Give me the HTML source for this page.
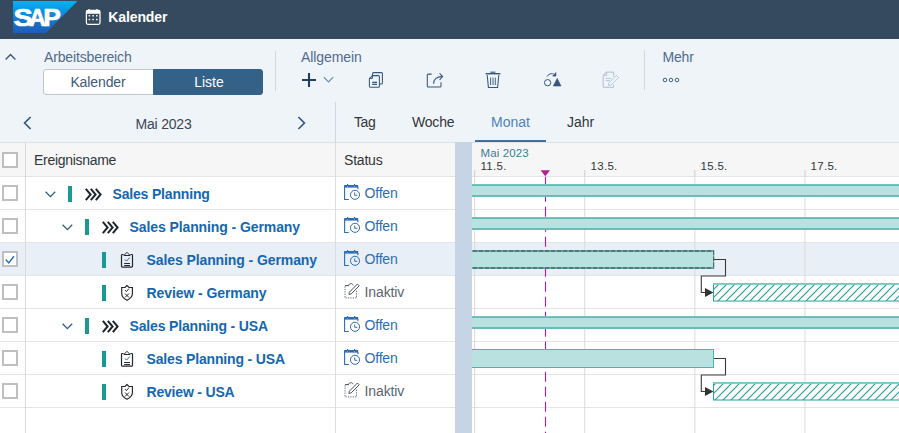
<!DOCTYPE html><html lang="de"><head><meta charset="utf-8"><title>Kalender</title><style>
*{box-sizing:border-box;margin:0;padding:0}
html,body{width:899px;height:433px;overflow:hidden;background:#fff}
body{font-family:"Liberation Sans",sans-serif;font-size:14px;line-height:16px;color:#32363a;position:relative}
.a{position:absolute;white-space:nowrap}
.hdr{left:0;top:0;width:899px;height:39px;background:#354a5f}
.tb{left:0;top:39px;width:899px;height:103px;background:#eff4f9}
.lbl{color:#516b8c}
.seg{top:69px;height:26px;text-align:center;line-height:24px}
.vl{width:1px;background:#d3d7db}
.hl{height:1px;background:#e4e4e4}
.cb{left:2px;width:16px;height:16px;border:2px solid #bfbfbf;background:#fff}
.ttl{font-weight:700;color:#1467b0}
.bar{background:#b9e1df;border-top:2px solid #62b9b5;border-bottom:2px solid #62b9b5}
svg{position:absolute;overflow:visible}
</style></head><body>
<div class="a hdr"></div>
<svg style="left:13px;top:1px" width="65" height="32" viewBox="0 0 65 32"><defs><linearGradient id="sg" x1="0" y1="0" x2="0" y2="1"><stop offset="0" stop-color="#00b5f0"/><stop offset="0.25" stop-color="#0a9be3"/><stop offset="0.7" stop-color="#1670c8"/><stop offset="1" stop-color="#1e5cba"/></linearGradient></defs><polygon points="0,0 64.5,0 33,32 0,32" fill="url(#sg)"/><g font-family="Liberation Sans,sans-serif" font-weight="700" font-size="24" fill="#fff" stroke="#fff" stroke-width="0.7"><text transform="translate(0.5 25) scale(1.2 1)">S</text><text transform="translate(16 25) scale(0.97 1)">A</text><text transform="translate(30.3 25) scale(1.1 1)">P</text></g></svg>
<svg style="left:85px;top:9px" width="16" height="16" viewBox="0 0 16 16" fill="none" stroke="#fff"><rect x="1.4" y="1.45" width="13.6" height="13.8" rx="1.5" stroke-width="1.25"/><rect x="1.4" y="1.2" width="13.6" height="3.6" fill="#fff" stroke="none"/><path d="M4 0v1.6M12 0v1.6" stroke-width="1.3"/><g fill="#fff" stroke="none"><rect x="3.6" y="6" width="1.6" height="1.5" opacity="0.92"/><rect x="7.3" y="6" width="1.6" height="1.5" opacity="0.92"/><rect x="11" y="6" width="1.6" height="1.5" opacity="0.92"/><rect x="3.6" y="9.8" width="1.6" height="1.5" opacity="0.92"/><rect x="7.3" y="9.8" width="1.6" height="1.5" opacity="0.92"/><rect x="11" y="9.8" width="1.6" height="1.5" opacity="0.92"/></g></svg>
<div class="a" style="left:108.2px;top:9px;color:#fff;font-weight:700;letter-spacing:-0.09px">Kalender</div>
<div class="a tb"></div>
<svg style="left:5px;top:52.5px" width="11" height="8" viewBox="0 0 11 8" fill="none" stroke="#3f5878" stroke-width="1.4"><path d="M0.6 6.6L5.5 1.4L10.4 6.6"/></svg>
<div class="a lbl" style="left:44px;top:49px;letter-spacing:-0.14px">Arbeitsbereich</div>
<div class="a seg" style="left:43px;width:111px;background:#fff;border:1px solid #c2c6cb;border-radius:3px 0 0 3px;color:#3f5878;letter-spacing:-0.1px;padding-right:1px">Kalender</div>
<div class="a seg" style="left:153px;width:110px;background:#346187;border:1px solid #346187;border-radius:0 3px 3px 0;color:#fff;padding-left:2px">Liste</div>
<div class="a vl" style="left:275px;top:51px;height:40px"></div>
<div class="a lbl" style="left:301px;top:49px;letter-spacing:-0.1px">Allgemein</div>
<svg style="left:301px;top:72px" width="16" height="16" viewBox="0 0 16 16" fill="none" stroke="#223e5f" stroke-width="2.1"><path d="M8 1v14M1 8h14"/></svg>
<svg style="left:323px;top:76px" width="11" height="8" viewBox="0 0 11 8" fill="none" stroke="#6a87ab" stroke-width="1.1"><path d="M0.8 1.2L5.5 6L10.2 1.2"/></svg>
<svg style="left:368px;top:71px" width="16" height="18" viewBox="0 0 16 18" fill="none" stroke="#36557d" stroke-width="1.05"><path d="M4.6 4.4V2.6q0-1 1-1H13.4q1 0 1 1V12q0 1-1 1H11.4"/><path d="M4.4 4.6H10.4q1 0 1 1V15.2q0 1-1 1H2.4q-1 0-1-1V7.6z"/><path d="M1.6 7.4H4.4V4.8" stroke-width="1"/><path d="M4.2 11.4H9M4.2 13.4H9" stroke-width="1.1"/></svg>
<svg style="left:426px;top:71px" width="18" height="18" viewBox="0 0 18 18" fill="none" stroke="#36557d" stroke-width="1.05"><path d="M5.6 3.1H2.3q-1 0-1 1V15q0 1 1 1H14q1 0 1-1V11.2"/><path d="M7.6 12.8C7.6 8.6 10.2 5.6 16.2 5.6"/><path d="M13.6 2.4L16.6 5.6L13.6 9"/></svg>
<svg style="left:485px;top:71px" width="16" height="18" viewBox="0 0 16 18" fill="none" stroke="#36557d" stroke-width="1.05"><path d="M0.6 2.7H15.4" stroke-width="1.4"/><path d="M5.4 1.2H10.4" stroke-width="1.1"/><path d="M2.2 4L3.4 16.4H12.6L13.8 4"/><path d="M5.6 6.6V14M8 6.6V14M10.3 6.6V14" stroke-width="0.9"/></svg>
<svg style="left:543px;top:72px" width="19" height="16" viewBox="0 0 19 16" fill="none" stroke="#36557d" stroke-width="1"><circle cx="4.6" cy="10.7" r="3.15"/><path d="M14.2 6.4L18 14H10.3z" fill="#36557d" stroke-width="0.6"/><path d="M4 4.6C6 1 10.4 0.8 12.6 3.4"/><path d="M12.8 0.4V4H9.6" fill="#36557d" stroke-width="0.9"/></svg>
<svg style="left:602px;top:71px" width="18" height="18" viewBox="0 0 18 18" fill="none" stroke="#b9c9da" stroke-width="1.2"><path d="M11.6 5.4V2.2q0-1-1-1H4.6L1.2 4.6V15.4q0 1 1 1H10.6q1 0 1-1V13.6"/><path d="M1.4 4.6H4.6V1.4" stroke-width="1"/><path d="M3.6 7.4H9.4M3.6 9.6H8" stroke-width="1"/><path d="M6.4 14.6L7 11.8L14.4 4.4L16.6 6.6L9.2 14z" stroke-width="1"/></svg>
<div class="a vl" style="left:644px;top:50px;height:40px"></div>
<div class="a lbl" style="left:662.5px;top:49px;letter-spacing:-0.2px">Mehr</div>
<svg style="left:662px;top:77px" width="19" height="6" viewBox="0 0 19 6" fill="none" stroke="#46617f" stroke-width="1"><circle cx="3" cy="3" r="1.8"/><circle cx="9" cy="3" r="1.8"/><circle cx="15" cy="3" r="1.8"/></svg>
<svg style="left:23px;top:116px" width="9" height="14" viewBox="0 0 9 14" fill="none" stroke="#2f5a8c" stroke-width="1.7"><path d="M7.6 1L1.6 7L7.6 13"/></svg>
<div class="a" style="left:135.5px;top:116px;color:#3a4654;letter-spacing:-0.2px">Mai 2023</div>
<svg style="left:297px;top:116px" width="9" height="14" viewBox="0 0 9 14" fill="none" stroke="#2f5a8c" stroke-width="1.7"><path d="M1.4 1L7.4 7L1.4 13"/></svg>
<div class="a" style="left:354px;top:114.3px;letter-spacing:-0.4px">Tag</div>
<div class="a" style="left:412px;top:114.3px;letter-spacing:-0.2px">Woche</div>
<div class="a" style="left:491px;top:114.3px;color:#4f82b8">Monat</div>
<div class="a" style="left:567px;top:114.3px;letter-spacing:-0.05px">Jahr</div>
<div class="a" style="left:475px;top:139.5px;width:71px;height:2.5px;background:#3b72a8"></div>
<div class="a" style="left:0;top:142px;width:899px;height:35px;background:#f6f6f6;border-top:1px solid #e0e0e0"></div>
<div class="a" style="left:0;top:242px;width:899px;height:33px;background:#e8eff7"></div>
<div class="a hl" style="left:0;top:176px;width:899px"></div>
<div class="a hl" style="left:0;top:209px;width:899px"></div>
<div class="a hl" style="left:0;top:242px;width:899px"></div>
<div class="a hl" style="left:0;top:275px;width:899px"></div>
<div class="a hl" style="left:0;top:308px;width:899px"></div>
<div class="a hl" style="left:0;top:341px;width:899px"></div>
<div class="a hl" style="left:0;top:374px;width:899px"></div>
<div class="a hl" style="left:0;top:407px;width:899px"></div>
<div class="a vl" style="left:25px;top:142px;height:291px;background:#dadada"></div>
<div class="a vl" style="left:335px;top:102px;height:40px;background:#cdd6e2"></div>
<div class="a vl" style="left:335px;top:142px;height:291px;background:#dddddd"></div>
<div class="a cb" style="top:152px"></div>
<div class="a" style="left:34px;top:152px;letter-spacing:-0.3px">Ereignisname</div>
<div class="a" style="left:344px;top:152px;letter-spacing:-0.2px">Status</div>
<div class="a" style="left:480.5px;top:147px;font-size:11.5px;line-height:13px;color:#3d7d92;letter-spacing:0.12px">Mai 2023</div>
<div class="a" style="left:480.5px;top:160px;font-size:11.5px;line-height:13px;color:#32363a;letter-spacing:0.3px">11.5.</div>
<div class="a" style="left:590.5px;top:160px;font-size:11.5px;line-height:13px;color:#32363a;letter-spacing:0.3px">13.5.</div>
<div class="a" style="left:700.5px;top:160px;font-size:11.5px;line-height:13px;color:#32363a;letter-spacing:0.3px">15.5.</div>
<div class="a" style="left:810.5px;top:160px;font-size:11.5px;line-height:13px;color:#32363a;letter-spacing:0.3px">17.5.</div>
<div class="a cb" style="top:185px"></div>
<svg style="left:45px;top:191px" width="11" height="7" viewBox="0 0 11 7" fill="none" stroke="#2f5a8c" stroke-width="1.3"><path d="M0.6 0.7L5.4 5.6L10.2 0.7"/></svg>
<div class="a" style="left:68px;top:186px;width:4px;height:15.6px;background:#179a94"></div>
<svg style="left:84.7px;top:188.3px" width="17" height="13" viewBox="0 0 17 13" fill="none" stroke="#1f242a" stroke-width="2"><path d="M0.8 0.9L5.6 6.5L0.8 12.1M5.8 0.9L10.6 6.5L5.8 12.1M10.8 0.9L15.6 6.5L10.8 12.1"/></svg>
<div class="a ttl" style="left:112.5px;top:185.7px;letter-spacing:-0.171px">Sales Planning</div>
<svg style="left:344px;top:184px" width="17" height="17" viewBox="0 0 17 17" fill="none" stroke="#2d6cb3" stroke-width="1.1"><path d="M4.8 15.5H0.6V1.6"/><path d="M0.4 1H14.2V3.6H0.4z" fill="#2d6cb3" stroke="none"/><path d="M13.9 3V5.2"/><path d="M3.6 0V1.4M10.6 0V1.4" stroke-width="1.2"/><circle cx="3.6" cy="2.3" r="0.42" fill="#fff" stroke="none"/><circle cx="10.6" cy="2.3" r="0.42" fill="#fff" stroke="none"/><circle cx="11" cy="10.8" r="4.55" stroke-width="1"/><path d="M10.7 8.5V11.3H13.3" stroke-width="0.95"/></svg>
<div class="a" style="left:364.5px;top:185.4px;color:#2d6cb3;letter-spacing:-0.2px">Offen</div>
<div class="a cb" style="top:218px"></div>
<svg style="left:62px;top:224px" width="11" height="7" viewBox="0 0 11 7" fill="none" stroke="#2f5a8c" stroke-width="1.3"><path d="M0.6 0.7L5.4 5.6L10.2 0.7"/></svg>
<div class="a" style="left:85px;top:219px;width:4px;height:15.6px;background:#179a94"></div>
<svg style="left:101.7px;top:221.3px" width="17" height="13" viewBox="0 0 17 13" fill="none" stroke="#1f242a" stroke-width="2"><path d="M0.8 0.9L5.6 6.5L0.8 12.1M5.8 0.9L10.6 6.5L5.8 12.1M10.8 0.9L15.6 6.5L10.8 12.1"/></svg>
<div class="a ttl" style="left:129.5px;top:218.7px;letter-spacing:-0.093px">Sales Planning - Germany</div>
<svg style="left:344px;top:217px" width="17" height="17" viewBox="0 0 17 17" fill="none" stroke="#2d6cb3" stroke-width="1.1"><path d="M4.8 15.5H0.6V1.6"/><path d="M0.4 1H14.2V3.6H0.4z" fill="#2d6cb3" stroke="none"/><path d="M13.9 3V5.2"/><path d="M3.6 0V1.4M10.6 0V1.4" stroke-width="1.2"/><circle cx="3.6" cy="2.3" r="0.42" fill="#fff" stroke="none"/><circle cx="10.6" cy="2.3" r="0.42" fill="#fff" stroke="none"/><circle cx="11" cy="10.8" r="4.55" stroke-width="1"/><path d="M10.7 8.5V11.3H13.3" stroke-width="0.95"/></svg>
<div class="a" style="left:364.5px;top:218.4px;color:#2d6cb3;letter-spacing:-0.2px">Offen</div>
<div class="a cb" style="top:251px"></div>
<svg style="left:4px;top:253px" width="12" height="12" viewBox="0 0 12 12" fill="none" stroke="#2f6db1" stroke-width="1.5"><path d="M1.7 6.6L4.8 9.9L9.9 3.2"/></svg>
<div class="a" style="left:102px;top:252px;width:4px;height:15.6px;background:#179a94"></div>
<svg style="left:120px;top:251px" width="14" height="17" viewBox="0 0 14 17" fill="none" stroke="#23262d" stroke-width="1.2"><path d="M3.6 3.5H2.3q-0.8 0-0.8 0.8V15.3q0 0.8 0.8 0.8H11.7q0.8 0 0.8-0.8V4.3q0-0.8-0.8-0.8H10.4"/><path d="M3.9 4.5L7 1.3L10.1 4.5z" stroke-width="1"/><path d="M4.9 8.4L6.5 10.1L9.8 6.5" stroke="#3b5d90" stroke-width="1"/><path d="M4.2 12.5H10M4.2 14.5H10" stroke-width="1"/></svg>
<div class="a ttl" style="left:146.5px;top:251.7px;letter-spacing:-0.093px">Sales Planning - Germany</div>
<svg style="left:344px;top:250px" width="17" height="17" viewBox="0 0 17 17" fill="none" stroke="#2d6cb3" stroke-width="1.1"><path d="M4.8 15.5H0.6V1.6"/><path d="M0.4 1H14.2V3.6H0.4z" fill="#2d6cb3" stroke="none"/><path d="M13.9 3V5.2"/><path d="M3.6 0V1.4M10.6 0V1.4" stroke-width="1.2"/><circle cx="3.6" cy="2.3" r="0.42" fill="#fff" stroke="none"/><circle cx="10.6" cy="2.3" r="0.42" fill="#fff" stroke="none"/><circle cx="11" cy="10.8" r="4.55" stroke-width="1"/><path d="M10.7 8.5V11.3H13.3" stroke-width="0.95"/></svg>
<div class="a" style="left:364.5px;top:251.4px;color:#2d6cb3;letter-spacing:-0.2px">Offen</div>
<div class="a cb" style="top:284px"></div>
<div class="a" style="left:102px;top:285px;width:4px;height:15.6px;background:#179a94"></div>
<svg style="left:120px;top:284px" width="14" height="17" viewBox="0 0 14 17" fill="none" stroke="#23262d" stroke-width="1.15"><path d="M7 1.5L5 3.5H1.7V9.6C1.7 12.8 4.2 15 7 16.3C9.8 15 12.4 12.8 12.4 9.6V3.5H9z"/><path d="M5 6.1L6.4 7.6L9 4.6" stroke-width="1"/><path d="M5 9.5L9 13.5M9 9.5L5 13.5" stroke-width="1"/></svg>
<div class="a ttl" style="left:146.5px;top:284.7px;letter-spacing:-0.087px">Review - Germany</div>
<svg style="left:344px;top:282px" width="17" height="17" viewBox="0 0 17 17" fill="none" stroke="#4d5560" stroke-width="1"><path d="M5 3.6H1V15.9H12.5V8.6" stroke-dasharray="1.3 1.1" stroke="#6a727c"/><path d="M1 3.6H4.6C5 1.2 8.4 1 9 3.2" stroke-width="1"/><path d="M4.9 12.4L5.4 10.2L13.4 2L15.2 3.8L7.1 12z" stroke-width="1"/></svg>
<div class="a" style="left:364.5px;top:283.6px;color:#5a6570;letter-spacing:-0.1px">Inaktiv</div>
<div class="a cb" style="top:317px"></div>
<svg style="left:62px;top:323px" width="11" height="7" viewBox="0 0 11 7" fill="none" stroke="#2f5a8c" stroke-width="1.3"><path d="M0.6 0.7L5.4 5.6L10.2 0.7"/></svg>
<div class="a" style="left:85px;top:318px;width:4px;height:15.6px;background:#179a94"></div>
<svg style="left:101.7px;top:320.3px" width="17" height="13" viewBox="0 0 17 13" fill="none" stroke="#1f242a" stroke-width="2"><path d="M0.8 0.9L5.6 6.5L0.8 12.1M5.8 0.9L10.6 6.5L5.8 12.1M10.8 0.9L15.6 6.5L10.8 12.1"/></svg>
<div class="a ttl" style="left:129.5px;top:317.7px;letter-spacing:-0.16px">Sales Planning - USA</div>
<svg style="left:344px;top:316px" width="17" height="17" viewBox="0 0 17 17" fill="none" stroke="#2d6cb3" stroke-width="1.1"><path d="M4.8 15.5H0.6V1.6"/><path d="M0.4 1H14.2V3.6H0.4z" fill="#2d6cb3" stroke="none"/><path d="M13.9 3V5.2"/><path d="M3.6 0V1.4M10.6 0V1.4" stroke-width="1.2"/><circle cx="3.6" cy="2.3" r="0.42" fill="#fff" stroke="none"/><circle cx="10.6" cy="2.3" r="0.42" fill="#fff" stroke="none"/><circle cx="11" cy="10.8" r="4.55" stroke-width="1"/><path d="M10.7 8.5V11.3H13.3" stroke-width="0.95"/></svg>
<div class="a" style="left:364.5px;top:317.4px;color:#2d6cb3;letter-spacing:-0.2px">Offen</div>
<div class="a cb" style="top:350px"></div>
<div class="a" style="left:102px;top:351px;width:4px;height:15.6px;background:#179a94"></div>
<svg style="left:120px;top:350px" width="14" height="17" viewBox="0 0 14 17" fill="none" stroke="#23262d" stroke-width="1.2"><path d="M3.6 3.5H2.3q-0.8 0-0.8 0.8V15.3q0 0.8 0.8 0.8H11.7q0.8 0 0.8-0.8V4.3q0-0.8-0.8-0.8H10.4"/><path d="M3.9 4.5L7 1.3L10.1 4.5z" stroke-width="1"/><path d="M4.9 8.4L6.5 10.1L9.8 6.5" stroke="#3b5d90" stroke-width="1"/><path d="M4.2 12.5H10M4.2 14.5H10" stroke-width="1"/></svg>
<div class="a ttl" style="left:146.5px;top:350.7px;letter-spacing:-0.16px">Sales Planning - USA</div>
<svg style="left:344px;top:349px" width="17" height="17" viewBox="0 0 17 17" fill="none" stroke="#2d6cb3" stroke-width="1.1"><path d="M4.8 15.5H0.6V1.6"/><path d="M0.4 1H14.2V3.6H0.4z" fill="#2d6cb3" stroke="none"/><path d="M13.9 3V5.2"/><path d="M3.6 0V1.4M10.6 0V1.4" stroke-width="1.2"/><circle cx="3.6" cy="2.3" r="0.42" fill="#fff" stroke="none"/><circle cx="10.6" cy="2.3" r="0.42" fill="#fff" stroke="none"/><circle cx="11" cy="10.8" r="4.55" stroke-width="1"/><path d="M10.7 8.5V11.3H13.3" stroke-width="0.95"/></svg>
<div class="a" style="left:364.5px;top:350.4px;color:#2d6cb3;letter-spacing:-0.2px">Offen</div>
<div class="a cb" style="top:383px"></div>
<div class="a" style="left:102px;top:384px;width:4px;height:15.6px;background:#179a94"></div>
<svg style="left:120px;top:383px" width="14" height="17" viewBox="0 0 14 17" fill="none" stroke="#23262d" stroke-width="1.15"><path d="M7 1.5L5 3.5H1.7V9.6C1.7 12.8 4.2 15 7 16.3C9.8 15 12.4 12.8 12.4 9.6V3.5H9z"/><path d="M5 6.1L6.4 7.6L9 4.6" stroke-width="1"/><path d="M5 9.5L9 13.5M9 9.5L5 13.5" stroke-width="1"/></svg>
<div class="a ttl" style="left:146.5px;top:383.7px;letter-spacing:-0.188px">Review - USA</div>
<svg style="left:344px;top:381px" width="17" height="17" viewBox="0 0 17 17" fill="none" stroke="#4d5560" stroke-width="1"><path d="M5 3.6H1V15.9H12.5V8.6" stroke-dasharray="1.3 1.1" stroke="#6a727c"/><path d="M1 3.6H4.6C5 1.2 8.4 1 9 3.2" stroke-width="1"/><path d="M4.9 12.4L5.4 10.2L13.4 2L15.2 3.8L7.1 12z" stroke-width="1"/></svg>
<div class="a" style="left:364.5px;top:382.6px;color:#5a6570;letter-spacing:-0.1px">Inaktiv</div>
<div class="a" style="left:455px;top:142px;width:17px;height:291px;background:#c6d5e6"></div>
<svg style="left:472px;top:142px;overflow:hidden" width="427" height="291" viewBox="472 142 427 291"><defs><pattern id="ht" patternUnits="userSpaceOnUse" width="8" height="8" x="3" y="0"><path d="M-2 2L2 -2M-2 10L10 -2M6 10L10 6" stroke="#2a9f99" stroke-width="1.2" fill="none"/></pattern></defs><path d="M474.65 170V176" stroke="#cdcdcd" stroke-width="1" fill="none"/><path d="M474.65 176V433" stroke="#dadada" stroke-width="1" fill="none"/><path d="M584.75 170V176" stroke="#cdcdcd" stroke-width="1" fill="none"/><path d="M584.75 176V433" stroke="#dadada" stroke-width="1" fill="none"/><path d="M694.85 170V176" stroke="#cdcdcd" stroke-width="1" fill="none"/><path d="M694.85 176V433" stroke="#dadada" stroke-width="1" fill="none"/><path d="M804.95 170V176" stroke="#cdcdcd" stroke-width="1" fill="none"/><path d="M804.95 176V433" stroke="#dadada" stroke-width="1" fill="none"/><path d="M545.5 176.8V433" stroke="#a5248c" stroke-width="1.1" stroke-dasharray="10 5" fill="none"/><path d="M540.6 170.2H550L545.3 176.2z" fill="#ab218e"/><rect x="472" y="184.2" width="427" height="12.6" fill="#b9e1df"/><rect x="472" y="184.2" width="427" height="1.8" fill="#62b9b5"/><rect x="472" y="195.1" width="427" height="1.8" fill="#62b9b5"/><rect x="472" y="217.2" width="427" height="12.6" fill="#b9e1df"/><rect x="472" y="217.2" width="427" height="1.8" fill="#62b9b5"/><rect x="472" y="228.1" width="427" height="1.8" fill="#62b9b5"/><rect x="472" y="316.2" width="427" height="12.6" fill="#b9e1df"/><rect x="472" y="316.2" width="427" height="1.8" fill="#62b9b5"/><rect x="472" y="327.09999999999997" width="427" height="1.8" fill="#62b9b5"/><rect x="472" y="250" width="242" height="19" fill="#b9e1df"/><rect x="472" y="250" width="242" height="2" fill="#62b9b5"/><rect x="472" y="267" width="242" height="2" fill="#62b9b5"/><rect x="713" y="250" width="1.2" height="19" fill="#62b9b5"/><path d="M472.8 251H713.4" stroke="#4a6665" stroke-width="1.7" stroke-dasharray="4.6 1.4" fill="none"/><path d="M472.8 268H713.4" stroke="#4a6665" stroke-width="1.7" stroke-dasharray="4.6 1.4" fill="none"/><path d="M713.6 250.4V269" stroke="#4a6665" stroke-width="1.1" stroke-dasharray="4.6 1.4" fill="none"/><rect x="460" y="349.5" width="253.5" height="18" fill="#b9e1df" stroke="#4fb3ae" stroke-width="1"/><rect x="713.5" y="283.5" width="200" height="17.5" fill="#fff"/><rect x="713.5" y="283.5" width="200" height="17.5" fill="url(#ht)" stroke="#2a9f99" stroke-width="1"/><rect x="713" y="283.1" width="200" height="1.8" fill="#7fcbc7"/><rect x="713.5" y="382.5" width="200" height="17.5" fill="#fff"/><rect x="713.5" y="382.5" width="200" height="17.5" fill="url(#ht)" stroke="#2a9f99" stroke-width="1"/><rect x="713" y="382.1" width="200" height="1.8" fill="#7fcbc7"/><path d="M714 259.5H725.5V276.0H701.3V292.5H706" stroke="#3a3a3a" stroke-width="1.1" fill="none"/><path d="M705 288.1L713.4 292.5L705 296.9z" fill="#333"/><path d="M714 358.5H725.5V375.0H701.3V391.5H706" stroke="#3a3a3a" stroke-width="1.1" fill="none"/><path d="M705 387.1L713.4 391.5L705 395.9z" fill="#333"/></svg>
</body></html>
